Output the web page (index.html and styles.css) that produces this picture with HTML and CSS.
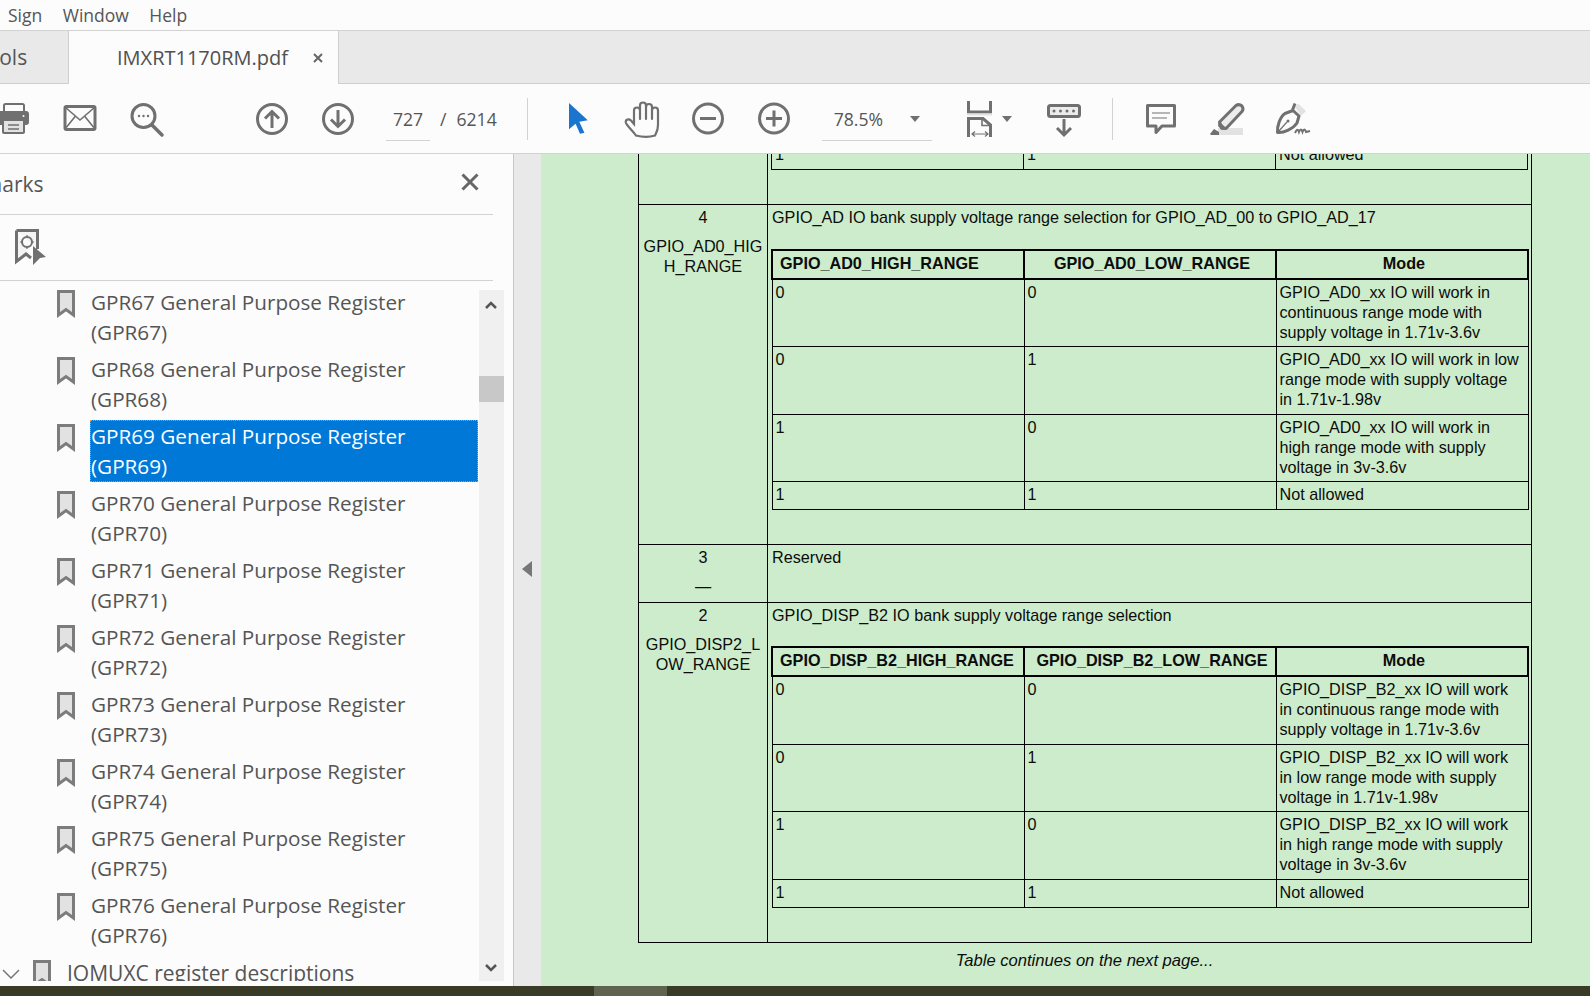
FILE: index.html
```html
<!DOCTYPE html>
<html lang="en">
<head>
<meta charset="utf-8">
<title>IMXRT1170RM.pdf</title>
<link rel="stylesheet" href="styles.css">
</head>
<body>
<div class="app">
  <nav class="menu">
    <span class="menu-item">Sign</span>
    <span class="menu-item">Window</span>
    <span class="menu-item">Help</span>
  </nav>
  <div class="tabs">
    <div class="tab-tools"><span class="tab-tools-label">Tools</span></div>
    <div class="tab-doc">
      <span class="tab-title">IMXRT1170RM.pdf</span>
      <svg class="tab-close" viewBox="0 0 10 10"><path d="M1 1L9 9M9 1L1 9"/></svg>
    </div>
  </div>
  <div class="toolbar">
    <svg class="ic ic-first" viewBox="0 0 36 36"><path class="s2" d="M8 10V4.5A1.5 1.5 0 0 1 9.500 3H26.500A1.500 1.500 0 0 1 28 4.500V10"/><rect class="f" x="1" y="10" width="32" height="14" rx="3"/><rect class="f" x="6" y="18" width="23" height="15" rx="2"/><rect class="lt" x="8" y="20" width="19" height="11"/><circle class="w" cx="27.500" cy="15" r="1"/><path class="s1" d="M12 24H23M12 28H23"/></svg>
    <svg class="ic" viewBox="0 0 36 36"><rect class="s3" x="3" y="5.500" width="30" height="23" rx="1.500"/><path class="s1" d="M3 6L18 19L33 6M3 28L13.500 15M33 28L22.500 15"/></svg>
    <svg class="ic" viewBox="0 0 36 36"><circle class="s3" cx="15.500" cy="15" r="11.500"/><path class="s3 rd" d="M24 24L34 34"/><circle class="f" cx="11" cy="15" r="1.200"/><circle class="f" cx="15.500" cy="15" r="1.200"/><circle class="f" cx="20" cy="15" r="1.200"/></svg>
    <svg class="ic ic-nav" viewBox="0 0 36 36"><circle class="s3" cx="18" cy="18" r="14.500"/><path class="s3" d="M18 27V11M11 17.500L18 10.500L25 17.500"/></svg>
    <svg class="ic" viewBox="0 0 36 36"><circle class="s3" cx="18" cy="18" r="14.500"/><path class="s3" d="M18 9V25M11 18.500L18 25.500L25 18.500"/></svg>
    <div class="page-field">727</div>
    <span class="page-sep">/</span>
    <span class="page-total">6214</span>
    <div class="tb-sep tb-sep-a"></div>
    <svg class="ic ic-cursor" viewBox="0 0 36 36"><path class="blue" d="M9 2L27.800 19.300L19.300 20.700L24.400 31.700L20 32.700L15.600 22.700L9 28.300Z"/></svg>
    <svg class="ic ic-hand" viewBox="0 0 36 36"><path class="s2h" d="M12 34.500C9 30 2.500 24.500 1.800 21.500C1.300 18.500 4.800 17.500 7 19.500L10 23V9.500A3 3 0 0 1 16 9.500V18M16 9V4.500A3 3 0 0 1 22 4.500V18M22 6A3 3 0 0 1 28 6V18M28 9.500A3 3 0 0 1 34 9.500V24C34 30 32 32 31 34.500C26 36 18 36 12 34.500"/></svg>
    <svg class="ic" viewBox="0 0 36 36"><circle class="s3" cx="18" cy="17.500" r="14.500"/><path class="s3" d="M10 17.500H26"/></svg>
    <svg class="ic" viewBox="0 0 36 36"><circle class="s3" cx="18" cy="17.500" r="14.500"/><path class="s3" d="M10 17.500H26M18 9.500V25.500"/></svg>
    <div class="zoom-field"><span class="zoom-value">78.5%</span><span class="caret caret-zoom"></span></div>
    <svg class="ic ic-fit" viewBox="0 0 36 36"><path class="s3" d="M7.500 0V11H29.500V0"/><rect class="lt" x="6" y="12.500" width="25" height="2"/><path class="s3" d="M7.500 36V17.500H22L29.500 24V36"/><path class="s1" d="M21 17.500V24.500H29.500"/><path class="s1t" d="M11 33H27M14 30.500L11 33L14 35.500M24 30.500L27 33L24 35.500"/></svg>
    <span class="caret caret-fit"></span>
    <svg class="ic ic-dl" viewBox="0 0 36 36"><rect class="s3 bx" x="1.500" y="4.500" width="31" height="11" rx="2"/><circle class="f" cx="7" cy="10" r="1.500"/><circle class="f" cx="13.500" cy="10" r="1.500"/><circle class="f" cx="20" cy="10" r="1.500"/><circle class="f" cx="26.500" cy="10" r="1.500"/><path class="s3" d="M17 18V33M10 27L17 34L24 27"/></svg>
    <div class="tb-sep tb-sep-b"></div>
    <svg class="ic ic-comment" viewBox="0 0 36 36"><path class="s3 rj" d="M4.500 4.500H31.500V25H19L13 31.500V25H4.500Z"/><path class="s1t" d="M9 12H27M9 17H24"/></svg>
    <svg class="ic" viewBox="0 0 36 36"><rect class="lt" x="9" y="27" width="25" height="7"/><path class="s3 bx rj" d="M10.500 21L27 4.500Q30 2.500 33 5Q35 8 33 10.500L17 27.500L12.500 27Z"/><path class="f" d="M10 20L18 28L13 29L9 25Z"/><path class="f" d="M1 33L5 28L10 31V34H2Z"/></svg>
    <svg class="ic" viewBox="0 0 36 36"><path class="lt" d="M20 6L23 2.500L31 10L26 15Z"/><path class="s3 rj" d="M2.500 31.500C2 25 5 16 10 12.500L18 9.500L24 15L22 22C18 28 9 32 2.500 31.500Z"/><path class="s3" d="M20 2.500L17.500 9"/><path class="s1t" d="M3 31L12 21"/><circle class="f" cx="13" cy="20" r="1.500"/><path class="s2" d="M20 32Q22.500 26 24 31Q26 26 27.500 31Q29.500 26 31 31L35 30"/></svg>
  </div>

  <div class="body">
    <aside class="sidebar">
      <div class="panel">
        <header class="panel-head">
          <span class="panel-title">Bookmarks</span>
          <svg class="panel-close" viewBox="0 0 18 18"><path d="M1.500 1.500L16.500 16.500M16.500 1.500L1.500 16.500"/></svg>
        </header>
        <div class="panel-tools">
          <svg class="bm-tool" viewBox="0 0 32 36"><path class="bm-tool-mark" d="M1.500 1.500H22.500V20M1.500 1.500V32.500L11 25L16 29"/><circle class="s2" cx="12" cy="13" r="5"/><path class="s1t" d="M12 6V9M12 17V20M5 13H8M16 13H19"/><path class="f" d="M18 17L31 28L25 29L18 36Z"/></svg>
        </div>
        <div class="bm-area">
          <div class="bm-list">
            <div class="bm"><svg class="bm-ic" viewBox="0 0 18 28"><path d="M1.500 1.500H16.500V25L9 19.500L1.500 25Z"/></svg><div class="bm-text">GPR67 General Purpose Register<br>(GPR67)</div></div>
            <div class="bm"><svg class="bm-ic" viewBox="0 0 18 28"><path d="M1.500 1.500H16.500V25L9 19.500L1.500 25Z"/></svg><div class="bm-text">GPR68 General Purpose Register<br>(GPR68)</div></div>
            <div class="bm"><svg class="bm-ic" viewBox="0 0 18 28"><path d="M1.500 1.500H16.500V25L9 19.500L1.500 25Z"/></svg><div class="bm-text selected">GPR69 General Purpose Register<br>(GPR69)</div></div>
            <div class="bm"><svg class="bm-ic" viewBox="0 0 18 28"><path d="M1.500 1.500H16.500V25L9 19.500L1.500 25Z"/></svg><div class="bm-text">GPR70 General Purpose Register<br>(GPR70)</div></div>
            <div class="bm"><svg class="bm-ic" viewBox="0 0 18 28"><path d="M1.500 1.500H16.500V25L9 19.500L1.500 25Z"/></svg><div class="bm-text">GPR71 General Purpose Register<br>(GPR71)</div></div>
            <div class="bm"><svg class="bm-ic" viewBox="0 0 18 28"><path d="M1.500 1.500H16.500V25L9 19.500L1.500 25Z"/></svg><div class="bm-text">GPR72 General Purpose Register<br>(GPR72)</div></div>
            <div class="bm"><svg class="bm-ic" viewBox="0 0 18 28"><path d="M1.500 1.500H16.500V25L9 19.500L1.500 25Z"/></svg><div class="bm-text">GPR73 General Purpose Register<br>(GPR73)</div></div>
            <div class="bm"><svg class="bm-ic" viewBox="0 0 18 28"><path d="M1.500 1.500H16.500V25L9 19.500L1.500 25Z"/></svg><div class="bm-text">GPR74 General Purpose Register<br>(GPR74)</div></div>
            <div class="bm"><svg class="bm-ic" viewBox="0 0 18 28"><path d="M1.500 1.500H16.500V25L9 19.500L1.500 25Z"/></svg><div class="bm-text">GPR75 General Purpose Register<br>(GPR75)</div></div>
            <div class="bm"><svg class="bm-ic" viewBox="0 0 18 28"><path d="M1.500 1.500H16.500V25L9 19.500L1.500 25Z"/></svg><div class="bm-text">GPR76 General Purpose Register<br>(GPR76)</div></div>
            <div class="bm bm-parent"><svg class="bm-chev" viewBox="0 0 18 10"><path d="M1 1L9 9L17 1"/></svg><svg class="bm-ic" viewBox="0 0 18 28"><path d="M1.500 1.500H16.500V25L9 19.500L1.500 25Z"/></svg><div class="bm-text">IOMUXC register descriptions</div></div>
          </div>
          <div class="scrollbar">
            <svg class="sb-arrow sb-up" viewBox="0 0 12 8"><path d="M1 7L6 2L11 7"/></svg>
            <div class="sb-thumb"></div>
            <svg class="sb-arrow sb-down" viewBox="0 0 12 8"><path d="M1 1L6 6L11 1"/></svg>
          </div>
        </div>
      </div>
    </aside>
    <div class="collapse-strip"><span class="collapse-arrow"></span></div>
    <main class="doc">
      <table class="outer">
        <colgroup><col class="oc1"><col class="oc2"></colgroup>
        <tr class="o-pre">
          <td></td>
          <td class="o-pre-cell">
            <table class="inner">
              <colgroup><col class="ic1"><col class="ic2"><col class="ic3"></colgroup>
              <tr class="r28"><td>1</td><td>1</td><td>Not allowed</td></tr>
            </table>
          </td>
        </tr>
        <tr class="o-big">
          <td class="field"><p>4</p><p>GPIO_AD0_HIG<br>H_RANGE</p></td>
          <td class="desc">
            <p class="lead">GPIO_AD IO bank supply voltage range selection for GPIO_AD_00 to GPIO_AD_17</p>
            <table class="inner">
              <colgroup><col class="ic1"><col class="ic2"><col class="ic3"></colgroup>
              <tr class="head"><th>GPIO_AD0_HIGH_RANGE</th><th>GPIO_AD0_LOW_RANGE</th><th>Mode</th></tr>
              <tr class="r67"><td>0</td><td>0</td><td>GPIO_AD0_xx IO will work in<br>continuous range mode with<br>supply voltage in 1.71v-3.6v</td></tr>
              <tr class="r68"><td>0</td><td>1</td><td>GPIO_AD0_xx IO will work in low<br>range mode with supply voltage<br>in 1.71v-1.98v</td></tr>
              <tr class="r67"><td>1</td><td>0</td><td>GPIO_AD0_xx IO will work in<br>high range mode with supply<br>voltage in 3v-3.6v</td></tr>
              <tr class="r28"><td>1</td><td>1</td><td>Not allowed</td></tr>
            </table>
          </td>
        </tr>
        <tr class="o-small">
          <td class="field"><p>3</p><p>—</p></td>
          <td class="desc"><p>Reserved</p></td>
        </tr>
        <tr class="o-big">
          <td class="field"><p>2</p><p>GPIO_DISP2_L<br>OW_RANGE</p></td>
          <td class="desc">
            <p class="lead lead-tight">GPIO_DISP_B2 IO bank supply voltage range selection</p>
            <table class="inner">
              <colgroup><col class="ic1"><col class="ic2"><col class="ic3"></colgroup>
              <tr class="head"><th>GPIO_DISP_B2_HIGH_RANGE</th><th>GPIO_DISP_B2_LOW_RANGE</th><th>Mode</th></tr>
              <tr class="r68"><td>0</td><td>0</td><td>GPIO_DISP_B2_xx IO will work<br>in continuous range mode with<br>supply voltage in 1.71v-3.6v</td></tr>
              <tr class="r67"><td>0</td><td>1</td><td>GPIO_DISP_B2_xx IO will work<br>in low range mode with supply<br>voltage in 1.71v-1.98v</td></tr>
              <tr class="r68"><td>1</td><td>0</td><td>GPIO_DISP_B2_xx IO will work<br>in high range mode with supply<br>voltage in 3v-3.6v</td></tr>
              <tr class="r28"><td>1</td><td>1</td><td>Not allowed</td></tr>
            </table>
          </td>
        </tr>
      </table>
      <p class="continues">Table continues on the next page...</p>
    </main>
  </div>
  <footer class="taskbar">
    <span class="task-active"></span>
    <span class="task-lang">ENG</span>
  </footer>
</div>
</body>
</html>
```

FILE: styles.css
```css
* { box-sizing: border-box; }
html, body { margin: 0; height: 100%; overflow: hidden; }
body { font-family: "Open Sans", "Noto Sans", sans-serif; color: #555; background: #fcfcfc; }
.app { width: 1590px; height: 996px; display: flex; flex-direction: column; overflow: hidden; }

/* menu */
.menu { height: 31px; flex: none; display: flex; gap: 20.500px; padding-left: 8px; align-items: center; font-size: 17.500px; background: #fcfcfc; border-bottom: 1px solid #d2d2d2; }

/* tabs */
.tabs { height: 53px; flex: none; display: flex; background: #e9e9e9; border-bottom: 1px solid #cfcfcf; }
.tab-tools { width: 68px; display: flex; align-items: center; overflow: hidden; font-size: 21px; }
.tab-tools-label { margin-left: -25px; }
.tab-doc { width: 271px; height: 53px; flex: none; background: #fcfcfc; border-left: 1px solid #cfcfcf; border-right: 1px solid #cfcfcf; display: flex; align-items: center; padding-left: 48px; font-size: 20px; color: #505050; }
.tab-close { width: 10px; height: 10px; margin-left: 25px; fill: none; stroke: #666; stroke-width: 2; }

/* toolbar */
.toolbar { height: 70px; flex: none; display: flex; align-items: center; background: #fcfcfc; border-bottom: 1px solid #d2d2d2; }
.ic { width: 36px; height: 36px; flex: none; margin-left: 30px; overflow: visible; }
.ic-first { margin-left: -4px; }
.ic-nav { margin-left: 90px; }
.ic-cursor { margin-left: 32px; }
.ic-hand { margin-left: 28px; }
.ic-fit { margin-left: 29px; }
.ic-dl { margin-left: 35px; }
.ic-comment { margin-left: 30px; }
.f { fill: #707070; stroke: none; }
.w { fill: #fcfcfc; }
.lt { fill: #e2e2e2; stroke: none; }
.blue { fill: #1b75cf; stroke: none; }
.s1 { fill: none; stroke: #707070; stroke-width: 1.600; }
.s1t { fill: none; stroke: #707070; stroke-width: 1.200; }
.s2 { fill: none; stroke: #707070; stroke-width: 2; }
.s2h { fill: none; stroke: #707070; stroke-width: 2.200; stroke-linecap: round; }
.s3 { fill: none; stroke: #707070; stroke-width: 3; }
.bx { fill: #ececec; }
.rd { stroke-linecap: round; stroke-width: 3.500; }
.rj { stroke-linejoin: round; }
.page-field { width: 44px; margin-left: 30px; height: 42px; line-height: 41px; margin-top: 2px; text-align: center; font-size: 17.600px; border-bottom: 1px solid #d2d2d2; }
.page-sep { margin-left: 10px; font-size: 17.600px; }
.page-total { margin-left: 10px; font-size: 17.600px; }
.tb-sep { width: 1px; height: 42px; flex: none; background: #d2d2d2; }
.tb-sep-a { margin-left: 30px; }
.tb-sep-b { margin-left: 29px; }
.zoom-field { width: 110px; height: 42px; margin-left: 30px; margin-top: 2px; border-bottom: 1px solid #d2d2d2; display: flex; align-items: center; padding-left: 12px; font-size: 17.600px; }
.caret { width: 0; height: 0; flex: none; border-left: 5px solid transparent; border-right: 5px solid transparent; border-top: 6px solid #707070; }
.caret-zoom { margin-left: 27px; }
.caret-fit { margin-left: 5px; }

/* layout body */
.body { flex: 1; min-height: 0; display: flex; }
.sidebar { width: 514px; flex: none; background: #fcfcfc; border-right: 1px solid #c8c8c8; overflow: hidden; }
.panel { width: 504px; height: 100%; display: flex; flex-direction: column; }
.panel-head { height: 61px; flex: none; margin-right: 11px; display: flex; align-items: center; justify-content: space-between; border-bottom: 1px solid #d2d2d2; font-size: 21px; padding-right: 14px; overflow: hidden; }
.panel-title { margin-left: -67px; margin-top: 0; }
.panel-close { width: 18px; height: 18px; fill: none; stroke: #666; stroke-width: 3; margin-top: -5px; }
.panel-tools { height: 66px; flex: none; margin-right: 11px; display: flex; align-items: center; padding-left: 15px; padding-bottom: 2px; border-bottom: 1px solid #d2d2d2; }
.bm-tool { width: 32px; height: 36px; overflow: visible; }
.bm-tool-mark { fill: #f4f4f4; stroke: #707070; stroke-width: 3; }
.bm-area { height: 700px; flex: none; display: flex; overflow: hidden; }
.bm-list { width: 479px; flex: none; padding-top: 5px; display: flex; flex-direction: column; gap: 5px; }
.bm { display: flex; padding-left: 57px; flex: none; }
.bm-ic { width: 18px; height: 28px; flex: none; margin-top: 4px; fill: #e2e2e2; stroke: #7c7c7c; stroke-width: 3; }
.bm-text { width: 388px; margin-left: 15px; padding: 1px 1px 0; line-height: 30px; font-size: 20.700px; color: #555; height: 62px; }
.selected { background: #0078d7; color: #fff; outline: 1px dotted #e89040; outline-offset: -1px; }
.bm-parent { padding-left: 2px; }
.bm-chev { width: 18px; height: 10px; flex: none; margin-top: 13px; fill: none; stroke: #777; stroke-width: 1.500; }
.bm-parent .bm-ic { margin-left: 13px; }
.bm-parent .bm-text { font-size: 21px; padding-top: 2px; }
.scrollbar { width: 25px; flex: none; margin-top: 9px; background: #f0f0f0; display: flex; flex-direction: column; align-items: center; }
.sb-arrow { width: 12px; height: 8px; flex: none; margin-right: 2px; fill: none; stroke: #555; stroke-width: 2.500; }
.sb-up { margin-top: 11px; }
.sb-thumb { width: 25px; height: 26px; flex: none; margin-top: 67px; background: #c8c8c8; }
.sb-down { margin-top: auto; margin-bottom: 9px; }
.collapse-strip { width: 27px; flex: none; background: #e9e9e9; display: flex; align-items: center; padding-left: 8px; }
.collapse-arrow { width: 0; height: 0; border-top: 8px solid transparent; border-bottom: 8px solid transparent; border-right: 10px solid #777; margin-top: -2px; }

/* document */
.doc { flex: 1; min-width: 0; background: #cdeccb; padding-left: 97px; overflow: hidden; color: #0c0c0c; font-family: "Liberation Sans", Arial, sans-serif; font-size: 16.200px; line-height: 20px; }
.doc p { margin: 0; }
.outer { border-collapse: collapse; table-layout: fixed; width: 893px; margin-top: -20px; }
.oc1 { width: 129px; }
.oc2 { width: 764px; }
.outer > tbody > tr > td { border: 1px solid #000; padding: 2px 4px 0; vertical-align: top; }
.o-pre { height: 70px; }
.outer > tbody > tr > td.o-pre-cell { padding-top: 6px; }
.o-big { height: 340px; }
.o-small { height: 58px; }
.field { text-align: center; }
.field p + p { margin-top: 9px; }
.doc .lead { margin-bottom: 22px; }
.doc .lead-tight { margin-bottom: 21px; }
.inner { border-collapse: collapse; table-layout: fixed; width: 756px; margin-left: -1px; }
.ic1 { width: 252px; }
.ic2 { width: 252px; }
.ic3 { width: 252px; }
.inner td { border: 1px solid #000; padding: 2px 3px 0; vertical-align: top; white-space: nowrap; }
.inner th { border: 2px solid #000; padding: 0 0 4px 4px; font-weight: 700; text-align: center; vertical-align: middle; white-space: nowrap; }
.inner th:first-child { text-align: left; padding-left: 7px; }
.head { height: 29px; }
.r68 { height: 68px; }
.r67 { height: 67px; }
.r28 { height: 28px; }
.doc .continues { font-style: italic; font-size: 16.600px; margin-top: 8px; width: 893px; text-align: center; }

/* bottom strip */
.taskbar { height: 10px; flex: none; background: #3a3b26; display: flex; overflow: hidden; }
.task-active { width: 73px; margin-left: 594px; background: #5f6350; }
.task-lang { margin-left: 700px; padding-top: 8px; color: #fff; font: 14px/14px "Liberation Sans", Arial, sans-serif; }
```
